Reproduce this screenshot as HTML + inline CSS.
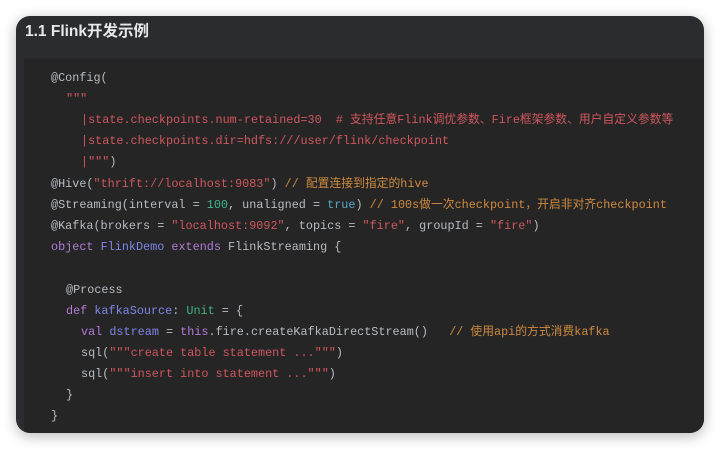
<!DOCTYPE html>
<html><head><meta charset="utf-8"><style>
html,body{margin:0;padding:0;background:#fff;width:720px;height:450px;overflow:hidden}
.card{position:absolute;left:16px;top:16px;width:688px;height:417px;background:#2a2c30;border-radius:14px;box-shadow:0 3px 14px rgba(0,0,0,.28);overflow:hidden}
.title{position:absolute;left:9px;top:3px;color:#e8e8e8;font:bold 15.5px "Liberation Sans","Noto Sans CJK SC",sans-serif}
.code{position:absolute;left:8px;top:42px;width:680px;height:375px;background:#252526}
.l{position:absolute;white-space:pre;font:11.8px "Liberation Mono","Noto Sans CJK SC",monospace;color:#b8bcc2;line-height:16px}
.s{color:#d0575d}.c{color:#cf8a3d}.n{color:#3fb88f}.b{color:#58a8c8}.k{color:#b37bd6}.t{color:#7f86e8}.u{color:#3bb77e}
</style></head><body>
<div class="card">
<div class="title">1.1 Flink开发示例</div>
<div class="code"></div>
</div>
<div class="l" style="left:51px;top:70px">@Config(</div>
<div class="l s" style="left:66px;top:91px">"""</div>
<div class="l s" style="left:81px;top:112px">|state.checkpoints.num-retained=30  # 支持任意Flink调优参数、Fire框架参数、用户自定义参数等</div>
<div class="l s" style="left:81px;top:133px">|state.checkpoints.dir=hdfs:///user/flink/checkpoint</div>
<div class="l" style="left:81px;top:154px"><span class="s">|"""</span>)</div>
<div class="l" style="left:51px;top:176px">@Hive(<span class="s">"thrift://localhost:9083"</span>) <span class="c">// 配置连接到指定的hive</span></div>
<div class="l" style="left:51px;top:197px">@Streaming(interval = <span class="n">100</span>, unaligned = <span class="b">true</span>) <span class="c">// 100s做一次checkpoint，开启非对齐checkpoint</span></div>
<div class="l" style="left:51px;top:218px">@Kafka(brokers = <span class="s">"localhost:9092"</span>, topics = <span class="s">"fire"</span>, groupId = <span class="s">"fire"</span>)</div>
<div class="l" style="left:51px;top:239px"><span class="k">object</span> <span class="t">FlinkDemo</span> <span class="k">extends</span> FlinkStreaming {</div>
<div class="l" style="left:66px;top:282px">@Process</div>
<div class="l" style="left:66px;top:303px"><span class="k">def</span> <span class="t">kafkaSource</span>: <span class="u">Unit</span> = {</div>
<div class="l" style="left:81px;top:324px"><span class="k">val</span> <span class="t">dstream</span> = <span class="k">this</span>.fire.createKafkaDirectStream()   <span class="c">// 使用api的方式消费kafka</span></div>
<div class="l" style="left:81px;top:345px">sql(<span class="s">"""create table statement ..."""</span>)</div>
<div class="l" style="left:81px;top:366px">sql(<span class="s">"""insert into statement ..."""</span>)</div>
<div class="l" style="left:66px;top:387px">}</div>
<div class="l" style="left:51px;top:408px">}</div>
</body></html>
